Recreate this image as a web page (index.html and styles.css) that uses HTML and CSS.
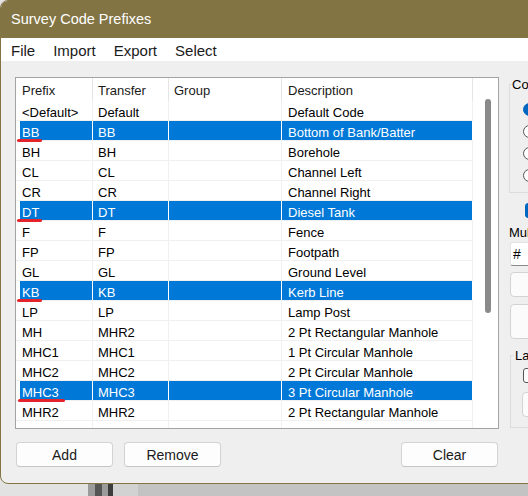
FILE: index.html
```html
<!DOCTYPE html>
<html lang="en">
  <head>
    <meta charset="UTF-8">
    <title>Survey Code Prefixes</title>
    <link rel="stylesheet" href="styles.css">
  </head>
  <body>
    <div class="window">
      <div class="titlebar">Survey Code Prefixes</div>
      <div class="menubar">
        <span>File</span>
        <span>Import</span>
        <span>Export</span>
        <span>Select</span>
      </div>
      <div class="content">
        <div class="left">
          <div class="listview">
            <div class="grid">
              <div class="row head">
                <div class="cell c1">Prefix</div>
                <div class="cell c2">Transfer</div>
                <div class="cell c3">Group</div>
                <div class="cell c4">Description</div>
              </div>
              <div class="row">
                <div class="cell c1">&lt;Default&gt;</div>
                <div class="cell c2">Default</div>
                <div class="cell c3"></div>
                <div class="cell c4">Default Code</div>
              </div>
              <div class="row sel">
                <div class="cell c1"><span class="mark">BB</span></div>
                <div class="cell c2">BB</div>
                <div class="cell c3"></div>
                <div class="cell c4">Bottom of Bank/Batter</div>
              </div>
              <div class="row">
                <div class="cell c1">BH</div>
                <div class="cell c2">BH</div>
                <div class="cell c3"></div>
                <div class="cell c4">Borehole</div>
              </div>
              <div class="row">
                <div class="cell c1">CL</div>
                <div class="cell c2">CL</div>
                <div class="cell c3"></div>
                <div class="cell c4">Channel Left</div>
              </div>
              <div class="row">
                <div class="cell c1">CR</div>
                <div class="cell c2">CR</div>
                <div class="cell c3"></div>
                <div class="cell c4">Channel Right</div>
              </div>
              <div class="row sel">
                <div class="cell c1"><span class="mark">DT</span></div>
                <div class="cell c2">DT</div>
                <div class="cell c3"></div>
                <div class="cell c4">Diesel Tank</div>
              </div>
              <div class="row">
                <div class="cell c1">F</div>
                <div class="cell c2">F</div>
                <div class="cell c3"></div>
                <div class="cell c4">Fence</div>
              </div>
              <div class="row">
                <div class="cell c1">FP</div>
                <div class="cell c2">FP</div>
                <div class="cell c3"></div>
                <div class="cell c4">Footpath</div>
              </div>
              <div class="row">
                <div class="cell c1">GL</div>
                <div class="cell c2">GL</div>
                <div class="cell c3"></div>
                <div class="cell c4">Ground Level</div>
              </div>
              <div class="row sel">
                <div class="cell c1"><span class="mark">KB</span></div>
                <div class="cell c2">KB</div>
                <div class="cell c3"></div>
                <div class="cell c4">Kerb Line</div>
              </div>
              <div class="row">
                <div class="cell c1">LP</div>
                <div class="cell c2">LP</div>
                <div class="cell c3"></div>
                <div class="cell c4">Lamp Post</div>
              </div>
              <div class="row">
                <div class="cell c1">MH</div>
                <div class="cell c2">MHR2</div>
                <div class="cell c3"></div>
                <div class="cell c4">2 Pt Rectangular Manhole</div>
              </div>
              <div class="row">
                <div class="cell c1">MHC1</div>
                <div class="cell c2">MHC1</div>
                <div class="cell c3"></div>
                <div class="cell c4">1 Pt Circular Manhole</div>
              </div>
              <div class="row">
                <div class="cell c1">MHC2</div>
                <div class="cell c2">MHC2</div>
                <div class="cell c3"></div>
                <div class="cell c4">2 Pt Circular Manhole</div>
              </div>
              <div class="row sel">
                <div class="cell c1"><span class="mark wide">MHC3</span></div>
                <div class="cell c2">MHC3</div>
                <div class="cell c3"></div>
                <div class="cell c4">3 Pt Circular Manhole</div>
              </div>
              <div class="row">
                <div class="cell c1">MHR2</div>
                <div class="cell c2">MHR2</div>
                <div class="cell c3"></div>
                <div class="cell c4">2 Pt Rectangular Manhole</div>
              </div>
              <div class="row">
                <div class="cell c1">MHR3</div>
                <div class="cell c2">MHR3</div>
                <div class="cell c3"></div>
                <div class="cell c4">3 Pt Rectangular Manhole</div>
              </div>
            </div>
            <div class="vscroll"><div class="thumb"></div></div>
          </div>
          <div class="buttons">
            <button class="btn">Add</button>
            <button class="btn">Remove</button>
            <button class="btn clear">Clear</button>
          </div>
        </div>

        <div class="side">
          <fieldset class="group first">
            <legend>Coordinates</legend>
            <div class="radios">
              <div class="radio on"></div>
              <div class="radio"></div>
              <div class="radio"></div>
              <div class="radio"></div>
            </div>
          </fieldset>
          <div class="check on"></div>
          <div class="side-label">Multi-code separator</div>
          <input class="side-input" type="text" value="#" readonly>
          <div class="side-btn"></div>
          <div class="side-btn tall"></div>
          <fieldset class="group second">
            <legend>Layers</legend>
            <div class="check inner"></div>
            <div class="side-btn inner"></div>
          </fieldset>
        </div>
      </div>
    </div>
    <div class="desktop">
      <div class="d1"></div>
      <div class="d2"></div>
      <div class="d3"></div>
      <div class="d2 narrow"></div>
      <div class="d3 thin"></div>
      <div class="d4"></div>
      <div class="d5"></div>
    </div>
  </body>
</html>
```

FILE: styles.css
```css
:root {
  --title: #827443;
  --face: #efefef;
  --grid-line: #f0f0f0;
  --select: #0078d7;
  --accent: #0067c0;
  --text: #1a1a1a;
  --btn-border: #d3d3d3;
}

body {
  margin: 0;
  width: 528px;
  height: 496px;
  overflow: hidden;
  background-color: #e4e4e4;
  font-family: "Liberation Sans", Arial, sans-serif;
  color: var(--text);
}

.window {
  width: 620px;
  height: 484px;
  box-sizing: border-box;
  border: 1px solid var(--title);
  border-radius: 8px;
  overflow: hidden;
  background-color: var(--face);
  display: flex;
  flex-direction: column;
}

.titlebar {
  height: 37px;
  flex-shrink: 0;
  background-color: var(--title);
  color: #fff;
  font-size: 14.5px;
  line-height: 37px;
  padding-left: 10px;
}

.menubar {
  height: 23px;
  flex-shrink: 0;
  background-color: #fff;
  display: flex;
  gap: 18px;
  padding-left: 10px;
  font-size: 15px;
  line-height: 25px;
}

.content {
  display: flex;
  padding: 16px 0 0 14px;
}

.left {
  width: 484px;
  flex-shrink: 0;
  display: flex;
  flex-direction: column;
}

/* list view */
.listview {
  height: 352px;
  box-sizing: border-box;
  border: 1px solid #a3a3a3;
  background-color: #fff;
  display: flex;
  overflow: hidden;
}

.grid {
  width: 457px;
  flex-shrink: 0;
}

.row {
  display: flex;
  height: 20px;
  box-sizing: border-box;
  border-bottom: 1px solid var(--grid-line);
  font-size: 13px;
  line-height: 19px;
  color: #000;
}

.row .cell {
  padding-top: 1.5px;
}

.row.head {
  height: 23px;
  border-bottom: none;
  line-height: 23px;
  color: var(--text);
}

.row.head .cell {
  padding-top: 1px;
}

.cell {
  box-sizing: border-box;
  border-right: 1px solid var(--grid-line);
  padding-left: 5px;
  white-space: nowrap;
  flex-shrink: 0;
}

.head .cell {
  border-right-color: #e5e5e5;
}

.c1 {
  width: 77px;
  border-left: 4px solid transparent;
  padding-left: 2px;
  background-clip: padding-box;
}

.c2 { width: 76px; }
.c3 { width: 113px; }
.c4 { width: 191px; padding-left: 6px; }

.row .c4 {
  padding-left: 6px;
}

.row .c1 {
  padding-left: 2px;
}

.sel .cell {
  background-color: var(--select);
  color: #fff;
  border-right-color: #fff;
}

.mark {
  position: relative;
  display: inline-block;
  height: 19px;
}

.mark::after {
  content: "";
  position: absolute;
  left: -5px;
  right: -3px;
  bottom: -0.5px;
  height: 3px;
  border-radius: 2px;
  background-color: #e3242b;
}

.mark.wide::after {
  left: -4px;
  right: -6px;
}

.vscroll {
  width: 25px;
  padding-top: 21px;
}

.thumb {
  margin-left: 12px;
  width: 6px;
  height: 214px;
  border-radius: 3px;
  background-color: #8a8a8a;
}

/* bottom buttons */
.buttons {
  display: flex;
  gap: 11px;
  margin: 13px 1px 0;
}

.btn {
  width: 97px;
  height: 25px;
  box-sizing: border-box;
  border: 1px solid var(--btn-border);
  border-bottom-color: #c4c4c4;
  border-radius: 4px;
  background-color: #fdfdfd;
  font-family: "Liberation Sans", Arial, sans-serif;
  font-size: 14px;
  color: var(--text);
  padding: 0;
}

.btn.clear {
  margin-left: auto;
}

/* right hand panel, clipped by the window */
.side {
  margin-left: 10px;
  width: 130px;
  flex-shrink: 0;
  display: flex;
  flex-direction: column;
  font-size: 13px;
}

.group {
  margin: 0;
  min-width: 0;
  width: 130px;
  box-sizing: border-box;
  border: 1px solid #dcdcdc;
  padding: 0 0 10px 2px;
}

.group legend {
  padding: 0;
  line-height: 15px;
  font-size: 13px;
  color: #000;
}

.radios {
  display: flex;
  flex-direction: column;
  gap: 9px;
  margin: 11px 0 0 11px;
}

.radio {
  width: 13px;
  height: 13px;
  box-sizing: border-box;
  border: 1px solid #555;
  border-radius: 50%;
  background-color: #fff;
}

.radio.on {
  background-color: var(--accent);
  border-color: var(--accent);
}

.check {
  width: 15px;
  height: 15px;
  box-sizing: border-box;
  border: 1px solid #555;
  border-radius: 3px;
  background-color: #fff;
}

.check.on {
  margin: 10px 0 0 16px;
  background-color: var(--accent);
  border-color: var(--accent);
}

.side-label {
  margin-top: 7px;
  line-height: 15px;
  color: #000;
  white-space: nowrap;
}

.side-input {
  margin: 2px 0 0 1px;
  width: 120px;
  height: 24px;
  box-sizing: border-box;
  border: 1px solid #e3e3e3;
  border-bottom-color: #8a8a8a;
  border-radius: 3px;
  padding: 0 0 0 2px;
  background-color: #fff;
  font-family: "Liberation Sans", Arial, sans-serif;
  font-size: 14px;
  color: #000;
  outline: none;
}

.side-btn {
  margin: 6px 0 0 1px;
  width: 110px;
  height: 25px;
  box-sizing: border-box;
  border: 1px solid var(--btn-border);
  border-radius: 4px;
  background-color: #fbfbfb;
}

.side-btn.tall {
  margin-top: 7px;
  height: 35px;
}

.group.second {
  margin: 9px 0 0 1px;
}

.group.second legend {
  padding: 0 2px;
}

.check.inner {
  margin: 5px 0 0 10px;
}

.side-btn.inner {
  margin: 9px 0 0 9px;
}

/* strip of desktop under the window */
.desktop {
  display: flex;
  height: 12px;
}

.d1 { width: 88px; background-color: #e2e2e2; }
.d2 { width: 7px; background-color: #9b9b9b; }
.d3 { width: 7px; background-color: #555; }
.d2.narrow { width: 6px; }
.d3.thin { width: 5px; background-color: #3c3c3c; }
.d4 { width: 25px; background-color: #d2d2d2; }
.d5 { flex: 1; background-color: #c3c3c3; }
```
